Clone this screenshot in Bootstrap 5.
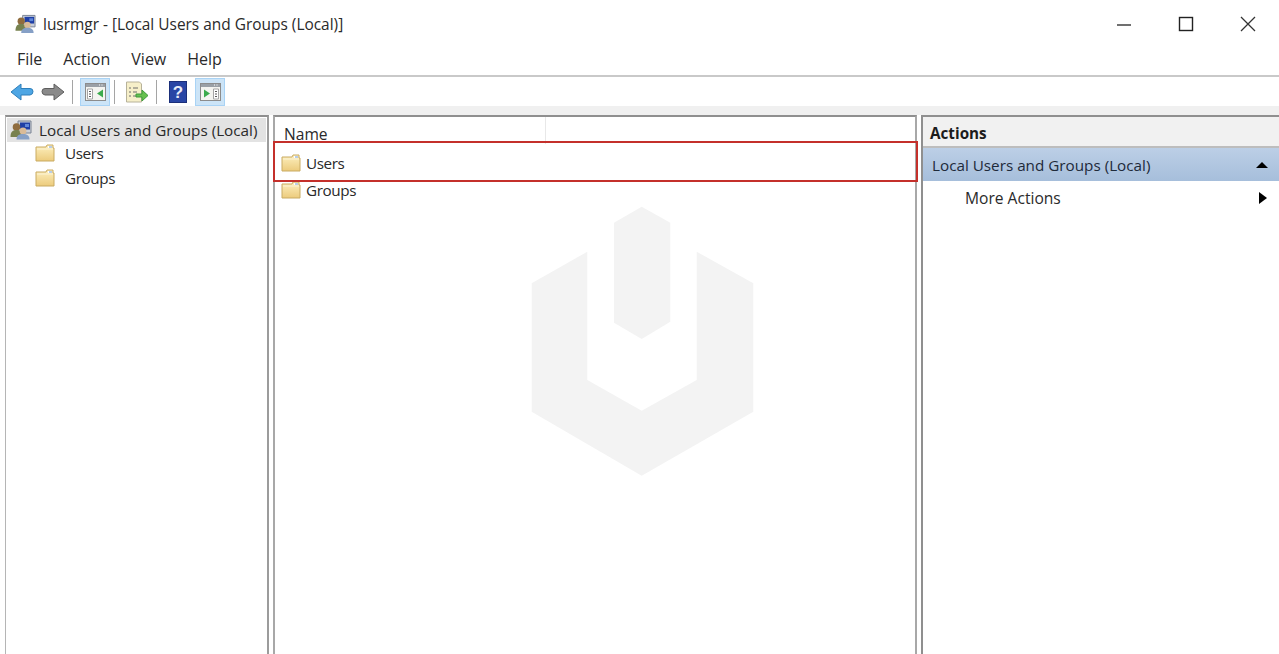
<!DOCTYPE html>
<html lang="en">
<head>
    <meta charset="UTF-8">
    <meta name="viewport" content="width=device-width, initial-scale=1.0">
    <title>lusrmgr</title>
    <link href="https://cdn.jsdelivr.net/npm/bootstrap@5.3.0/dist/css/bootstrap.min.css" rel="stylesheet">
    <style>
        html, body { height: 100%; overflow: hidden; }
        body { background: #fff; color: #2a2a2a; font-family: "Open Sans", "Noto Sans", sans-serif; font-size: 15.25px; line-height: 20px; }
        .app-shell { width: 1279px; height: 654px; }
        .title-row { height: 45px; padding-left: 15px; padding-top: 3px; }
        .title-row .caption { margin-left: 7px; font-size: 15.45px; }
        .win-btn { width: 62px; height: 42px; display: flex; align-items: center; justify-content: center; }
        .menu-row { height: 32px; padding-left: 17px; gap: 21px; border-bottom: 2px solid #c9c9c9; padding-bottom: 2px; font-size: 16px; }
        .tool-row { height: 29px; padding-left: 6px; padding-top: 1px; }
        .tool-item { width: 31px; height: 28px; display: flex; align-items: center; justify-content: center; }
        .tool-item.on { width: 30px; background: #cce4f7; border: 1px solid #a9d3f5; }
        .tool-item.narrow-doc { width: 30px; }
        .tool-item.narrow-help { width: 27px; }
        .tool-sep { width: 1px; height: 24px; background: #a5a5a5; margin: 0 7px 0 4px; }
        .strip { height: 9px; background: #f0f0f0; }
        .panes { height: 539px; padding-left: 5px; gap: 4px; }
        .pane { border: 1px solid #b5b5b5; border-top: 2px solid #8f8f8f; border-bottom: 0; position: relative; }
        .pane-left { width: 264px; border-right: 2px solid #9c9c9c; padding: 1px; }
        .pane-mid { width: 644px; border-left: 2px solid #a8a8a8; border-right: 2px solid #a8a8a8; }
        .pane-right { flex: 1; border-left: 2px solid #8f8f8f; border-right: 0; }
        .tree-root { height: 24px; background: #e3e3e3; padding-left: 3px; gap: 7px; }
        .tree-child { height: 24.5px; padding-left: 28px; padding-bottom: 2px; gap: 10px; }
        .folder-label { letter-spacing: -.4px; }
        .name-head { height: 27px; padding: 7px 0 0 9px; width: 271px; border-right: 1px solid #e8e8e8; position: relative; z-index: 1; font-size: 15.6px; }
        .list-item { height: 26px; padding-left: 6px; gap: 5px; position: relative; z-index: 1; }
        .list-first { margin-top: 6px; height: 27px; padding-bottom: 1px; }
        .wmark { position: absolute; left: 256px; top: 89px; }
        .red-box { position: absolute; left: -2px; top: 24px; width: 645px; height: 41px; border: 2px solid #c4302b; z-index: 2; }
        .act-title { height: 31px; background: #f1f1f1; border-bottom: 2px solid #bdbdbd; padding: 3px 0 0 7px; font-weight: 700; color: #1c1c1c; }
        .act-group { height: 33px; background: linear-gradient(#bccfe6, #a6bedb); padding: 0 11px 0 9px; color: #1e2a3a; }
        .act-row { height: 33px; padding: 0 12px 0 42px; font-size: 15.6px; }
        .tri-up { width: 0; height: 0; border-left: 6px solid transparent; border-right: 6px solid transparent; border-bottom: 6px solid #000; }
        .tri-right { width: 0; height: 0; border-top: 6px solid transparent; border-bottom: 6px solid transparent; border-left: 8px solid #000; }
    </style>
</head>
<body>
<svg width="0" height="0" class="position-absolute">
    <defs>
        <linearGradient id="folderFill" x1="0" y1="0" x2="0" y2="1">
            <stop offset="0" stop-color="#fdf0c0"/>
            <stop offset="1" stop-color="#eccb7c"/>
        </linearGradient>
        <symbol id="folder" viewBox="0 0 20 18">
            <path d="M1 3h10l1-2h6v3h1v13H1z" fill="url(#folderFill)" stroke="#c9ab62" stroke-width="1"/>
            <path d="M13 2h4v2h-4z" fill="#fff"/>
            <path d="M14 2.500h3v1h-3z" fill="#6f9bd0"/>
            <path d="M2 5h16" stroke="#fbf3d4" stroke-width="1"/>
        </symbol>
        <symbol id="users-pc" viewBox="0 0 22 20">
            <path d="M8 1h13v12H8z" fill="#c9ced8" stroke="#7a8494"/>
            <path d="M10 2.500h10v7H10z" fill="#1f3fa6"/>
            <path d="M15 4h4v3h-4z" fill="#5f86d8"/>
            <circle cx="6.500" cy="7" r="3.800" fill="#8f6c3e"/>
            <path d="M0.500 17c0-5.500 2.500-7 6-7s6 1.500 6 7z" fill="#77824f"/>
            <circle cx="13" cy="11" r="3.400" fill="#d9bb98"/>
            <path d="M6.500 19.500c0-4 2.500-5.500 6.500-5.500s6.500 1.500 6.500 5.500z" fill="#86a0c6"/>
        </symbol>
        <symbol id="panel-frame" viewBox="0 0 21 18">
            <rect x=".5" y=".5" width="20" height="17" fill="#f4f4f0" stroke="#8c8c8c"/>
            <rect x="1" y="1" width="19" height="3" fill="#9aa0a6"/>
            <path d="M14 2h1M16.500 2h1" stroke="#fff"/>
        </symbol>
    </defs>
</svg>

<div class="app-shell d-flex flex-column">
    <div class="title-row d-flex align-items-center justify-content-between">
        <div class="d-flex align-items-center">
            <svg width="21" height="20"><use href="#users-pc"/></svg>
            <span class="caption">lusrmgr - [Local Users and Groups (Local)]</span>
        </div>
        <div class="d-flex">
            <div class="win-btn"><svg width="16" height="16"><path d="M1 9h14" stroke="#222" stroke-width="1.3"/></svg></div>
            <div class="win-btn"><svg width="16" height="16"><rect x="1.500" y="1.500" width="13" height="13" fill="none" stroke="#222" stroke-width="1.400"/></svg></div>
            <div class="win-btn"><svg width="16" height="16"><path d="M1 1l14 14M15 1L1 15" stroke="#333" stroke-width="1.300"/></svg></div>
        </div>
    </div>

    <div class="menu-row d-flex align-items-center">
        <span>File</span><span>Action</span><span>View</span><span>Help</span>
    </div>

    <div class="tool-row d-flex align-items-center">
        <div class="tool-item"><svg width="24" height="20"><path d="M1 10l10-8v4.500h9q3 0 3 3t-3 3.500h-9V18z" fill="#4ea6e4" stroke="#2f7fba"/></svg></div>
        <div class="tool-item"><svg width="24" height="20"><path d="M23 10L13 2v4.500H4q-3 0-3 3t3 3.500h9V18z" fill="#8a8a8a" stroke="#5e5e5e"/></svg></div>
        <div class="tool-sep"></div>
        <div class="tool-item on">
            <svg width="21" height="18"><use href="#panel-frame"/><path d="M2.500 6h5v10h-5z" fill="#fff" stroke="#a5a5a5"/><path d="M4 8.500h2M4 11h2M4 13.500h2" stroke="#5a5a5a"/><path d="M18 6.500v8L12 10.500z" fill="#3cab4d"/></svg>
        </div>
        <div class="tool-sep"></div>
        <div class="tool-item narrow-doc">
            <svg width="24" height="22"><path d="M1.500 1h13l2 2v18h-15z" fill="#f6efc9" stroke="#b7b29a"/><path d="M4 7h2M8 7h5M4 11h2M8 11h4M4 15h2M8 15h3" stroke="#6d6d6d"/><path d="M11 13h6V9l6 5.500-6 5.500v-4h-6z" fill="#66c04f" stroke="#3f9b3d"/></svg>
        </div>
        <div class="tool-sep"></div>
        <div class="tool-item narrow-help">
            <svg width="18" height="22"><rect x=".5" y=".5" width="17" height="21" fill="#2946a5" stroke="#1b2f7a"/><text x="9" y="17" font-size="17" font-weight="700" fill="#e8ecf8" text-anchor="middle" font-family="Liberation Sans, sans-serif">?</text></svg>
        </div>
        <div class="tool-item on ms-1">
            <svg width="21" height="18"><use href="#panel-frame"/><path d="M13.500 6h5v10h-5z" fill="#fff" stroke="#a5a5a5"/><path d="M15 8.500h2M15 11h2M15 13.500h2" stroke="#5a5a5a"/><path d="M4 6.500v8l6-4z" fill="#3cab4d"/></svg>
        </div>
    </div>

    <div class="strip"></div>

    <div class="panes d-flex">
        <div class="pane pane-left">
            <div class="tree-root d-flex align-items-center">
                <svg width="22" height="20"><use href="#users-pc"/></svg>
                <span>Local Users and Groups (Local)</span>
            </div>
            <div class="tree-child d-flex align-items-center">
                <svg width="20" height="18"><use href="#folder"/></svg><span class="folder-label">Users</span>
            </div>
            <div class="tree-child d-flex align-items-center">
                <svg width="20" height="18"><use href="#folder"/></svg><span class="folder-label">Groups</span>
            </div>
        </div>

        <div class="pane pane-mid">
            <div class="name-head">Name</div>
            <div class="list-item list-first d-flex align-items-center">
                <svg width="20" height="18"><use href="#folder"/></svg><span class="folder-label">Users</span>
            </div>
            <div class="list-item d-flex align-items-center">
                <svg width="20" height="18"><use href="#folder"/></svg><span class="folder-label">Groups</span>
            </div>
            <div class="red-box"></div>
            <svg class="wmark" width="224" height="272" viewBox="531 206 224 272">
                <path d="M641.700 206.700 670.300 222.700V321.700L641.700 339 614 322.700V222.700z" fill="#f3f3f3"/>
                <path d="M587.300 251.700V380L641.700 410.700 696.700 380V251.700L753.300 283.300V411.700L641.700 475.700 531.700 411.700V283.300z" fill="#f3f3f3"/>
            </svg>
        </div>

        <div class="pane pane-right">
            <div class="act-title d-flex align-items-center">Actions</div>
            <div class="act-group d-flex align-items-center justify-content-between">
                <span>Local Users and Groups (Local)</span><i class="tri-up"></i>
            </div>
            <div class="act-row d-flex align-items-center justify-content-between">
                <span>More Actions</span><i class="tri-right"></i>
            </div>
        </div>
    </div>
</div>
<script src="https://cdn.jsdelivr.net/npm/bootstrap@5.3.0/dist/js/bootstrap.bundle.min.js"></script>
</body>
</html>
